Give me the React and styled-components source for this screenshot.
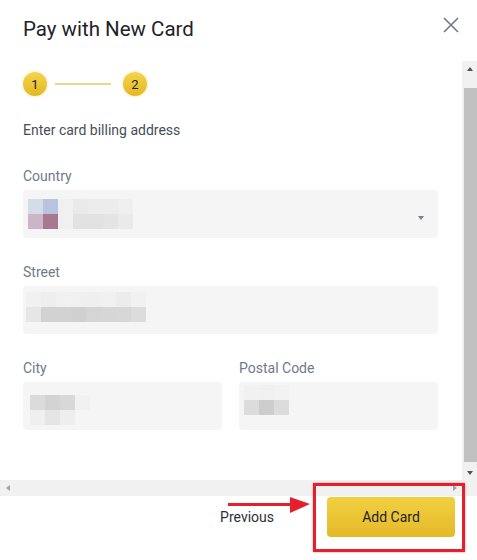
import React from "react";
import styled, { createGlobalStyle } from "styled-components";

const Global = createGlobalStyle`
  html, body { margin: 0; padding: 0; background: #fff; overflow: hidden; }
  body { font-family: Roboto, "Noto Sans", Arial, sans-serif; }
  * { box-sizing: border-box; }
`;

const Dialog = styled.div`
  position: relative;
  width: 477px;
  height: 560px;
  display: flex;
  flex-direction: column;
  background: #fff;
`;

const Header = styled.div`
  height: 61px;
  flex: none;
  display: flex;
  align-items: flex-start;
  justify-content: space-between;
  padding: 15px 18px 0 23px;
`;

const Title = styled.h1`
  margin: 0;
  font-size: 20.5px;
  line-height: 28px;
  font-weight: 400;
  color: #1e2329;
`;

const CloseBtn = styled.button`
  border: 0;
  background: none;
  padding: 0;
  margin-top: 2px;
  width: 16px;
  height: 16px;
  display: flex;
  color: #707a8a;
`;

const ScrollFrame = styled.div`
  height: 435px;
  flex: none;
  display: flex;
  flex-direction: column;
`;

const ScrollRow = styled.div`
  flex: 1;
  display: flex;
  min-height: 0;
`;

const Content = styled.div`
  flex: 1;
  padding: 11px 24px 0 23px;
  display: flex;
  flex-direction: column;
`;

const VBar = styled.div`
  width: 15px;
  flex: none;
  background: #f1f1f1;
  display: flex;
  flex-direction: column;
`;

const VArrow = styled.div`
  height: 15px;
  flex: none;
  display: flex;
  align-items: center;
  justify-content: center;
  &::after {
    content: "";
    border-left: 3.5px solid transparent;
    border-right: 3.5px solid transparent;
    ${(p) => (p.$down ? "border-top: 4px solid #505050;" : "border-bottom: 4px solid #505050;")}
  }
`;

const VTrack = styled.div`
  flex: 1;
  padding: 12px 0 3px 2px;
  display: flex;
`;

const Thumb = styled.div`
  flex: 1;
  background: #c1c1c1;
`;

const HBar = styled.div`
  height: 16px;
  flex: none;
  background: #f1f1f1;
  display: flex;
`;

const HArrow = styled.div`
  width: 15px;
  flex: none;
  display: flex;
  align-items: center;
  justify-content: center;
  &::after {
    content: "";
    border-top: 3.5px solid transparent;
    border-bottom: 3.5px solid transparent;
    ${(p) => (p.$right ? "border-left: 4px solid #a3a3a3;" : "border-right: 4px solid #a3a3a3;")}
  }
`;

const HTrack = styled.div`
  flex: 1;
`;

const Corner = styled.div`
  width: 15px;
  flex: none;
  background: #f1f1f1;
`;

const Stepper = styled.div`
  display: flex;
  align-items: center;
  height: 24px;
`;

const StepDot = styled.div`
  width: 24px;
  height: 24px;
  border-radius: 50%;
  background: linear-gradient(180deg, #f4d54c 0%, #e4b822 100%);
  box-shadow: 0 0 3px rgba(240, 200, 60, 0.55);
  display: flex;
  align-items: center;
  justify-content: center;
  font-size: 13px;
  color: #1e2329;
`;

const StepLine = styled.div`
  width: 56px;
  height: 2px;
  margin: 0 12px 0 8px;
  background: #ecd68c;
`;

const Subtitle = styled.p`
  margin: 24px 0 0;
  font-size: 14px;
  line-height: 20px;
  color: #474d57;
`;

const Field = styled.div`
  margin-top: ${(p) => p.$top}px;
  flex: ${(p) => (p.$grow ? 1 : "none")};
  display: flex;
  flex-direction: column;
`;

const Label = styled.label`
  font-size: 14px;
  line-height: 20px;
  color: #707a8a;
  margin-bottom: 4px;
`;

const InputBox = styled.div`
  height: 48px;
  border-radius: 4px;
  background: #f5f5f5;
  display: flex;
  align-items: flex-start;
  justify-content: space-between;
  padding: ${(p) => p.$pad};
`;

const FieldRow = styled.div`
  display: flex;
  gap: 17px;
`;

const Pixels = styled.div`
  display: grid;
  grid-auto-rows: 15px;
  grid-template-columns: repeat(${(p) => p.$cols}, 15px);
`;

const Cell = styled.div`
  background: ${(p) => p.$c};
`;

const Caret = styled.div`
  align-self: center;
  width: 0;
  height: 0;
  border-left: 3px solid transparent;
  border-right: 3px solid transparent;
  border-top: 4px solid #76808c;
  margin-top: -1px;
`;

const Footer = styled.div`
  height: 64px;
  flex: none;
  display: flex;
  justify-content: flex-end;
  align-items: flex-start;
  gap: 53px;
  padding: 1px 22px 0 0;
`;

const TextButton = styled.button`
  border: 0;
  background: none;
  padding: 0;
  height: 40px;
  font-family: inherit;
  font-size: 14px;
  font-weight: 400;
  color: #2b3139;
`;

const PrimaryButton = styled.button`
  width: 128px;
  height: 40px;
  border: 0;
  border-radius: 4px;
  background: linear-gradient(180deg, #f1d042 0%, #e5b928 100%);
  font-family: inherit;
  font-size: 14px;
  font-weight: 400;
  color: #1e2329;
`;

const Highlight = styled.div`
  position: absolute;
  left: 313px;
  top: 483px;
  width: 152px;
  height: 69px;
  border: 3px solid #e3202c;
  box-shadow: 0 0 2px rgba(227, 32, 44, 0.5);
  pointer-events: none;
`;

const ArrowMark = styled.svg`
  position: absolute;
  left: 226px;
  top: 494px;
  pointer-events: none;
`;

const country = [
  ["#d5dbe9", "#b8c3de", "#f0f0f0", "#e9eaea", "#ececec", "#ececec", "#efefef"],
  ["#cdb4c8", "#a8788f", "#f0f0f0", "#e2e2e2", "#e2e2e2", "#e4e4e4", "#eaeaea"],
];
const street = [
  ["#f1f1f1", "#eeeeee", "#f1f1f1", "#f0f0f0", "#efefef", "#f1f1f1", "#ececec", "#f1f1f1"],
  ["#e6e6e6", "#d2d2d2", "#d2d2d2", "#d0d0d0", "#d5d5d5", "#d6d6d6", "#d7d7d7", "#dcdcdc"],
];
const city = [
  ["#dbdbdb", "#d3d3d3", "#d8d8d8", "#f1f1f1"],
  ["#eef0ee", "#e5e5e5", "#eeeeee", "#f5f5f5"],
];
const postal = [
  ["#f1f1f1", "#eff0ef", "#f2f2f2"],
  ["#dcdcdc", "#cdcdcd", "#dcdcdc"],
];

function Blur({ rows }) {
  return (
    <Pixels $cols={rows[0].length}>
      {rows.flat().map((c, i) => (
        <Cell key={i} $c={c} />
      ))}
    </Pixels>
  );
}

export default function App() {
  return (
    <>
      <Global />
      <Dialog>
        <Header>
          <Title>Pay with New Card</Title>
          <CloseBtn aria-label="close">
            <svg width="16" height="16" viewBox="0 0 16 16">
              <path d="M1 1L15 15M15 1L1 15" stroke="currentColor" strokeWidth="1.6" fill="none" />
            </svg>
          </CloseBtn>
        </Header>
        <ScrollFrame>
          <ScrollRow>
            <Content>
              <Stepper>
                <StepDot>1</StepDot>
                <StepLine />
                <StepDot>2</StepDot>
              </Stepper>
              <Subtitle>Enter card billing address</Subtitle>
              <Field $top={26}>
                <Label>Country</Label>
                <InputBox $pad="9px 14px 0 5px">
                  <Blur rows={country} />
                  <Caret />
                </InputBox>
              </Field>
              <Field $top={24}>
                <Label>Street</Label>
                <InputBox $pad="6px 0 0 3px">
                  <Blur rows={street} />
                </InputBox>
              </Field>
              <FieldRow>
                <Field $top={24} $grow>
                  <Label>City</Label>
                  <InputBox $pad="13px 0 0 7px">
                    <Blur rows={city} />
                  </InputBox>
                </Field>
                <Field $top={24} $grow>
                  <Label>Postal Code</Label>
                  <InputBox $pad="3px 0 0 5px">
                    <Blur rows={postal} />
                  </InputBox>
                </Field>
              </FieldRow>
            </Content>
            <VBar>
              <VArrow />
              <VTrack>
                <Thumb />
              </VTrack>
              <VArrow $down />
            </VBar>
          </ScrollRow>
          <HBar>
            <HArrow />
            <HTrack />
            <HArrow $right />
            <Corner />
          </HBar>
        </ScrollFrame>
        <Footer>
          <TextButton>Previous</TextButton>
          <PrimaryButton>Add Card</PrimaryButton>
        </Footer>
        <Highlight />
        <ArrowMark width="86" height="22" viewBox="0 0 86 22">
          <path d="M2 10.5H66" stroke="#e3202c" strokeWidth="3" />
          <path d="M64 3L84 10L64 19Z" fill="#e3202c" />
        </ArrowMark>
      </Dialog>
    </>
  );
}
